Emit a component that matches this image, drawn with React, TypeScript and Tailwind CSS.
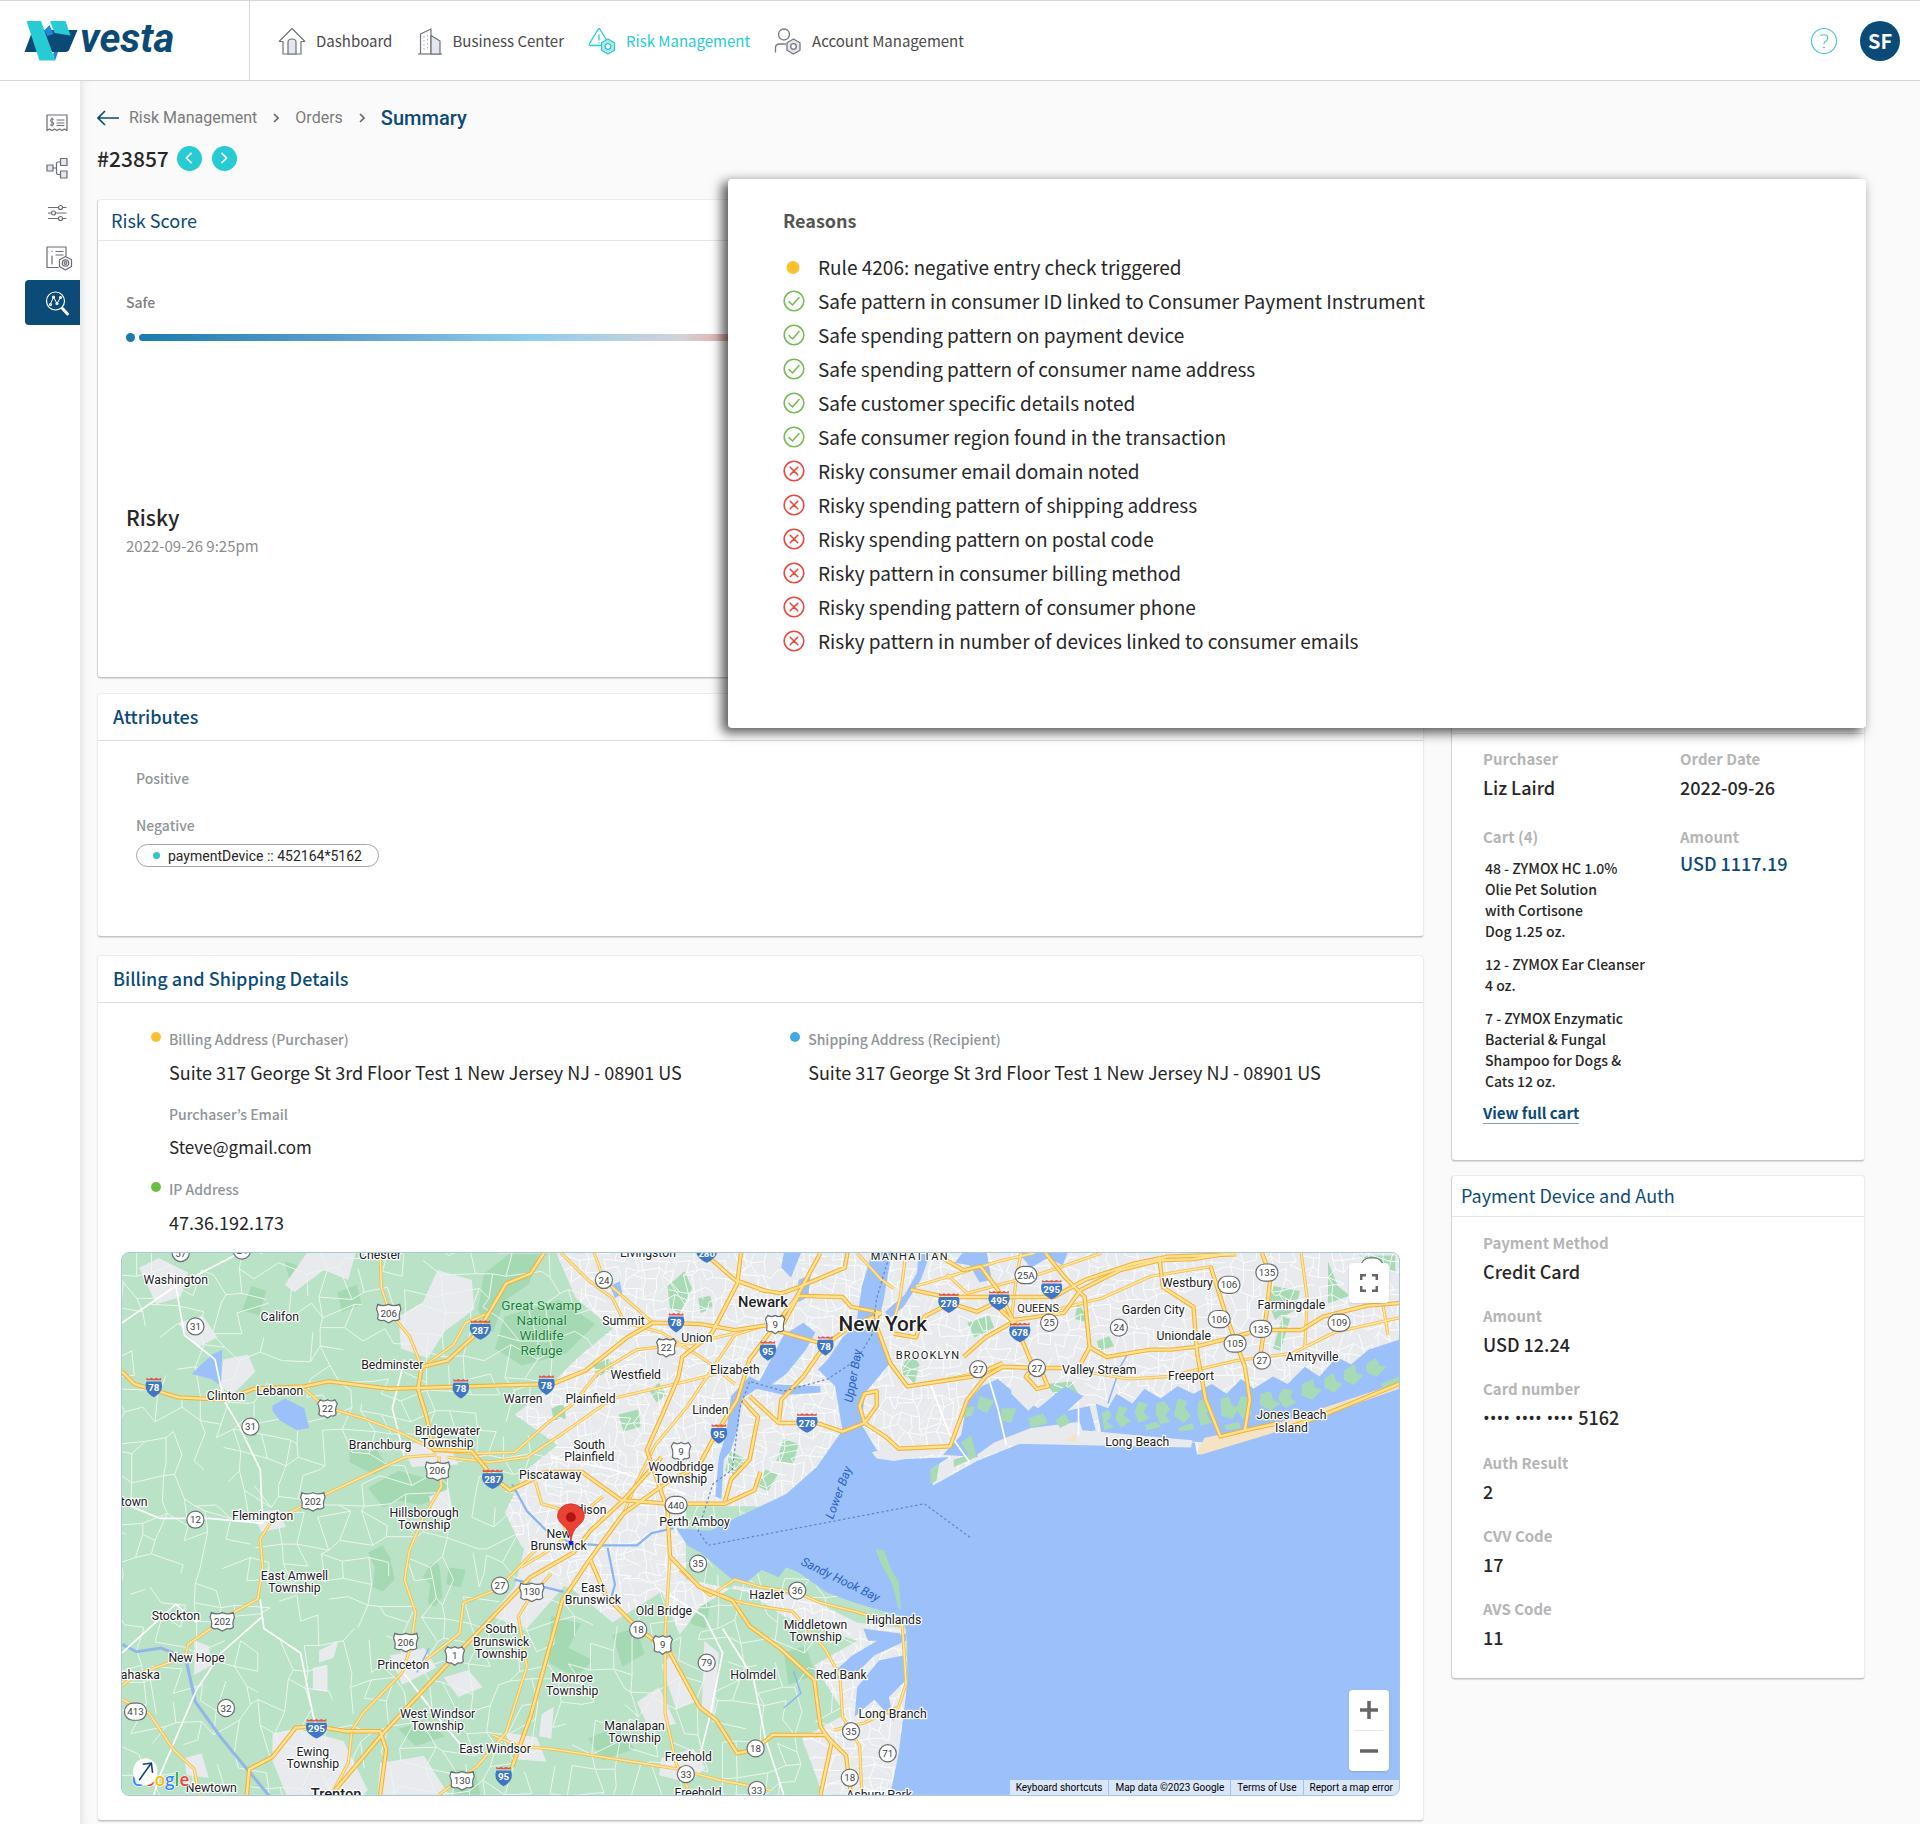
import type { ReactNode } from "react";

const reasons = [
  { kind: "rule", text: "Rule 4206: negative entry check triggered" },
  { kind: "safe", text: "Safe pattern in consumer ID linked to Consumer Payment Instrument" },
  { kind: "safe", text: "Safe spending pattern on payment device" },
  { kind: "safe", text: "Safe spending pattern of consumer name address" },
  { kind: "safe", text: "Safe customer specific details noted" },
  { kind: "safe", text: "Safe consumer region found in the transaction" },
  { kind: "risky", text: "Risky consumer email domain noted" },
  { kind: "risky", text: "Risky spending pattern of shipping address" },
  { kind: "risky", text: "Risky spending pattern on postal code" },
  { kind: "risky", text: "Risky pattern in consumer billing method" },
  { kind: "risky", text: "Risky spending pattern of consumer phone" },
  { kind: "risky", text: "Risky pattern in number of devices linked to consumer emails" },
];

const cartItems = [
  ["48 - ZYMOX HC 1.0%", "Olie Pet Solution", "with Cortisone", "Dog 1.25 oz."],
  ["12 - ZYMOX Ear Cleanser", "4 oz."],
  ["7 - ZYMOX Enzymatic", "Bacterial & Fungal", "Shampoo for Dogs &", "Cats 12 oz."],
];

const payment: { label: string; value: ReactNode }[] = [
  { label: "Payment Method", value: "Credit Card" },
  { label: "Amount", value: "USD 12.24" },
  {
    label: "Card number",
    value: (
      <>
        <span className="font-['Open_Sans',sans-serif]">•••• •••• •••• </span>5162
      </>
    ),
  },
  { label: "Auth Result", value: "2" },
  { label: "CVV Code", value: "17" },
  { label: "AVS Code", value: "11" },
];

/* ---------- Icons ---------- */

function Logo() {
  return (
    <svg viewBox="24 9 160 64" className="h-16 w-40" role="img" aria-label="vesta">
      <path d="M32 32h6l4 20H24.500z" fill="#0b4a74" />
      <path d="M43 30h34.500l-8 19q-1 3-4 3H52z" fill="#0b4a74" />
      <path d="M49.500 25l-5 5 3 6 6-2z" fill="#2484e0" />
      <path d="M53 54l2 7 3-9-4 0z" fill="#2484e0" />
      <path d="M50 21h15.500l5 14.500L54.500 33z" fill="#27cbd3" />
      <path d="M26.500 21H41l14 39.500H39.500z" fill="#27cbd3" />
      <text x="80" y="52" fontFamily="Roboto, sans-serif" fontSize="40" fontWeight="700" fontStyle="italic" fill="#0b4a74">
        vesta
      </text>
    </svg>
  );
}

function HomeIcon() {
  return (
    <svg viewBox="0 0 28 28" className="size-7" fill="none" stroke="#6e7276" strokeWidth="1.2" strokeLinejoin="round" aria-hidden="true">
      <path d="M1 14.500 14 1.500l13 13" />
      <path d="M1 14.500h4V27h18V14.500h4" />
      <path d="M10 27V15q0-3 4-3t4 3v12z" fill="#e4e7ee" />
    </svg>
  );
}

function BuildingIcon() {
  return (
    <svg viewBox="-2 0 26 28" className="h-7 w-[26px]" fill="none" stroke="#6e7276" strokeWidth="1.2" strokeLinejoin="round" aria-hidden="true">
      <path d="M0 27h24" />
      <path d="M2.500 27V7L13 2v25" />
      <path d="M13 8.500l9 5.500v13h-9z" fill="#e4e7ee" />
      <path d="M6 9v15M9.500 8v16" strokeDasharray="1.500 2.500" strokeWidth="1" stroke="#a9acb0" />
    </svg>
  );
}

function RiskIcon() {
  return (
    <svg viewBox="0 0 28 28" className="size-7" fill="none" stroke="#27cbd3" strokeWidth="1.300" strokeLinejoin="round" strokeLinecap="round" aria-hidden="true">
      <path d="M13 18.500H2.500Q.5 18.500 1.500 16.500L10 2.500q1-1.500 2 0L18 12" />
      <path d="M11 8v5M11 15.500v.3" />
      <path d="M20 12l6.500 3.800v7.400L20 27l-6.500-3.800v-7.400z" fill="#b9e4e6" />
      <circle cx="20" cy="19.500" r="2.800" fill="#fff" />
    </svg>
  );
}

function AccountIcon() {
  return (
    <svg viewBox="0 0 28 28" className="size-7" fill="none" stroke="#77797c" strokeWidth="1.300" strokeLinejoin="round" strokeLinecap="round" aria-hidden="true">
      <circle cx="10" cy="7.500" r="5.500" />
      <path d="M1.500 25v-4q0-4 4-4h6" />
      <path d="M19.500 12l6.500 3.800v7.400L19.500 27 13 23.200v-7.400z" fill="#e4e7ee" />
      <circle cx="19.500" cy="19.500" r="2.800" fill="#fff" />
    </svg>
  );
}

function SideIcon({ children, color = "#6a6c73" }: { children: ReactNode; color?: string }) {
  return (
    <svg viewBox="0 0 28 28" className="size-7 overflow-visible" fill="none" stroke={color} strokeWidth="1.200" strokeLinejoin="round" strokeLinecap="round" aria-hidden="true">
      {children}
    </svg>
  );
}

const sideItems = [
  {
    name: "Transactions",
    icon: (
      <SideIcon>
        <path d="M4 21.500V6h20v15.500l-2.500-1.500-2.500 1.500-2.500-1.500-2.500 1.500-2.500-1.500L9 21.500 6.500 20z" />
        <path d="M14 11h7M14 14h7M14 16.500h7" strokeWidth="1" />
        <path d="M10.500 10.200q-3-1-3 1t1.500 1.800 1.700 2-3.200 1M9 9v8" strokeWidth="1" />
      </SideIcon>
    ),
  },
  {
    name: "Relationships",
    icon: (
      <SideIcon>
        <path d="M4 11h6v6H4zM17.500 4.500H24v7h-6.500zM17.500 17H24v7h-6.500z" fill="#e4e7ee" />
        <path d="M10 14h3.500M17 8h-2q-1.500 0-1.500 1.500v9q0 2 1.500 2h2" />
      </SideIcon>
    ),
  },
  {
    name: "Settings",
    icon: (
      <SideIcon>
        <path d="M5.500 8.500h10M19.500 8.500H23M5.500 14H8M12.500 14H23M5.500 19.500h10M19.500 19.500H23" />
        <circle cx="17.500" cy="8.500" r="2" />
        <circle cx="10.500" cy="14" r="2" />
        <circle cx="17.500" cy="19.500" r="2" />
      </SideIcon>
    ),
  },
  {
    name: "Reports",
    icon: (
      <SideIcon>
        <path d="M15 23.500H4V3h19v9M9 12v8M9 7v.5M13 7.500h7M13 11h7" />
        <path d="M22.500 12.500l6 3.200v6.800l-6 3.500-6-3.500v-6.800z" fill="#fff" />
        <circle cx="22.500" cy="19" r="3.200" />
        <circle cx="22.500" cy="19" r="1.300" />
      </SideIcon>
    ),
  },
];

function InvestigateIcon() {
  return (
    <SideIcon color="#fff">
      <circle cx="12.500" cy="12" r="9" />
      <path d="M19.500 19.500l5 5.500" strokeWidth="3" />
      <path d="M7.500 15l3-7 3.500 6.500 3.500-6" strokeWidth="1" />
      <circle cx="7.500" cy="15.500" r="1" />
      <circle cx="10.500" cy="8" r="1" />
      <circle cx="14" cy="14.500" r="1" />
      <circle cx="17.500" cy="8.500" r="1" />
    </SideIcon>
  );
}

function ReasonIcon({ kind }: { kind: string }) {
  if (kind === "rule") {
    return (
      <svg viewBox="0 0 22 22" className="size-[22px]" aria-hidden="true">
        <circle cx="10" cy="11.500" r="6.500" fill="#fbc02d" />
      </svg>
    );
  }
  const safe = kind === "safe";
  return (
    <svg viewBox="0 0 22 22" className="size-[22px]" fill="none" stroke={safe ? "#77bd54" : "#e94a3f"} strokeWidth="1.600" strokeLinecap="round" strokeLinejoin="round" aria-hidden="true">
      <circle cx="11" cy="11" r="9.800" />
      <path d={safe ? "M6 11.500l3.500 3.500 6.500-7.500" : "M7.200 7.200l7.600 7.600M14.800 7.200l-7.600 7.600"} />
    </svg>
  );
}

function Chevron() {
  return (
    <svg viewBox="0 0 6 10" className="mx-4 h-2.5 w-1.5" fill="none" stroke="#666" strokeWidth="1.600" aria-hidden="true">
      <path d="M1 1l4 4-4 4" />
    </svg>
  );
}

/* ---------- Map ---------- */

// label rows: x (centre), y (middle of the first line), lines
const towns: [number, number, string[]][] = [
  [143, 1045, ["Washington"]],
  [228, 1076, ["Califon"]],
  [310, 1025, ["Chester"]],
  [320, 1115, ["Bedminster"]],
  [184, 1140, ["Clinton"]],
  [228, 1136, ["Lebanon"]],
  [509, 1079, ["Summit"]],
  [569, 1093, ["Union"]],
  [600, 1119, ["Elizabeth"]],
  [519, 1123, ["Westfield"]],
  [427, 1143, ["Warren"]],
  [482, 1143, ["Plainfield"]],
  [580, 1152, ["Linden"]],
  [365, 1169, ["Bridgewater", "Township"]],
  [310, 1180, ["Branchburg"]],
  [481, 1180, ["South", "Plainfield"]],
  [449, 1205, ["Piscataway"]],
  [556, 1198, ["Woodbridge", "Township"]],
  [109, 1227, ["town"]],
  [214, 1238, ["Flemington"]],
  [346, 1236, ["Hillsborough", "Township"]],
  [480, 1233, ["Edison"]],
  [567, 1243, ["Perth Amboy"]],
  [456, 1253, ["New", "Brunswick"]],
  [240, 1287, ["East Amwell", "Township"]],
  [484, 1297, ["East", "Brunswick"]],
  [143, 1320, ["Stockton"]],
  [542, 1316, ["Old Bridge"]],
  [626, 1303, ["Hazlet"]],
  [409, 1331, ["South", "Brunswick", "Township"]],
  [160, 1354, ["New Hope"]],
  [114, 1368, ["ahaska"]],
  [329, 1360, ["Princeton"]],
  [467, 1371, ["Monroe", "Township"]],
  [615, 1368, ["Holmdel"]],
  [666, 1327, ["Middletown", "Township"]],
  [730, 1323, ["Highlands"]],
  [687, 1368, ["Red Bank"]],
  [729, 1400, ["Long Branch"]],
  [357, 1400, ["West Windsor", "Township"]],
  [255, 1431, ["Ewing", "Township"]],
  [404, 1429, ["East Windsor"]],
  [518, 1410, ["Manalapan", "Township"]],
  [562, 1435, ["Freehold"]],
  [570, 1465, ["Freehold"]],
  [172, 1461, ["Newtown"]],
  [718, 1466, ["Asbury Park"]],
  [529, 1023, ["Livingston"]],
  [970, 1048, ["Westbury"]],
  [942, 1070, ["Garden City"]],
  [967, 1091, ["Uniondale"]],
  [1055, 1066, ["Farmingdale"]],
  [1072, 1108, ["Amityville"]],
  [898, 1119, ["Valley Stream"]],
  [973, 1124, ["Freeport"]],
  [929, 1178, ["Long Beach"]],
  [1055, 1156, ["Jones Beach", "Island"]],
];

const stateRoutes: [number, number, string][] = [
  [147, 1023, "57"], [197, 1021, "24"], [159, 1083, "31"], [493, 1045, "24"], [204, 1165, "31"], [159, 1241, "12"],
  [184, 1395, "32"], [110, 1398, "413"], [408, 1295, "27"], [570, 1277, "35"], [521, 1331, "18"],
  [577, 1358, "79"], [617, 1428, "18"], [560, 1449, "33"], [552, 1229, "440"], [651, 1299, "36"],
  [618, 1462, "33"], [695, 1414, "35"], [725, 1432, "71"], [694, 1452, "18"], [838, 1041, "25A"],
  [857, 1080, "25"], [914, 1084, "24"], [799, 1118, "27"], [847, 1117, "27"], [1031, 1111, "27"],
  [1004, 1049, "106"], [996, 1077, "106"], [1009, 1097, "105"], [1035, 1039, "135"], [1030, 1085, "135"],
  [1094, 1080, "109"], [1121, 1034, "110"],
];

const usRoutes: [number, number, string][] = [
  [317, 1072, "206"], [267, 1150, "22"], [357, 1201, "206"], [255, 1226, "202"], [181, 1324, "202"],
  [331, 1341, "206"], [371, 1352, "1"], [434, 1300, "130"], [377, 1454, "130"], [541, 1343, "9"],
  [556, 1185, "9"], [544, 1100, "22"], [633, 1081, "9"],
];

const interstates: [number, number, string][] = [
  [125, 1132, "78"], [376, 1133, "78"], [446, 1130, "78"], [552, 1079, "78"], [392, 1085, "287"],
  [402, 1207, "287"], [587, 1170, "95"], [627, 1102, "95"], [674, 1098, "78"], [258, 1411, "295"],
  [411, 1450, "95"], [659, 1161, "278"], [775, 1063, "278"], [816, 1061, "495"], [859, 1052, "295"],
  [833, 1087, "678"], [577, 1022, "280"],
];

const highways = [
  "M99 1120 109 1130 125 1135 145 1141 183 1143 207 1134 248 1132 268 1128 317 1134 385 1132 451 1130 478 1119 512 1092 533 1080 571 1081 600 1086 640 1080 652 1058",
  "M444 1023 433 1040 413 1048 399 1072 389 1089 365 1111 344 1116 341 1134 348 1157 354 1184 385 1185 402 1206 416 1217 433 1209 445 1202 475 1202 507 1225 547 1228",
  "M418 1443 433 1402 459 1307 481 1274 509 1236 547 1209 570 1198 585 1170 602 1143 612 1110 627 1090 650 1060 670 1023",
  "M547 1271 571 1296 598 1307 612 1328 638 1347 665 1372 670 1410 679 1424 670 1466",
  "M547 1271 545 1233 528 1184 540 1157 554 1124 557 1108 581 1089 602 1048 605 1023",
  "M482 1274 495 1304 519 1328 547 1350 571 1394 585 1405 602 1432 616 1429 631 1417 674 1417 691 1434 695 1466",
  "M201 1466 203 1445 222 1435 241 1411 258 1410 282 1414 310 1414 315 1429 310 1466",
  "M270 1466 313 1415 368 1356 433 1288 468 1268 482 1250 509 1225 540 1190",
  "M547 1228 592 1228 616 1217 621 1202M592 1226 597 1208 612 1192 619 1157 606 1143",
  "M612 1140 636 1162 667 1162 688 1169 706 1162 723 1173 734 1183 776 1181 785 1157 790 1143 805 1124 819 1116 847 1117 868 1117",
  "M706 1162 702 1148 706 1138 716 1136 716 1148 706 1162",
  "M716 1070 716 1083 727 1113 741 1132 794 1124 819 1113",
  "M744 1053 773 1059 808 1059 861 1059 886 1045 925 1032 954 1026 1010 1024",
  "M730 1089 748 1092 755 1075 776 1064 798 1071 812 1064 826 1078 869 1072 883 1053 915 1037 947 1029 975 1028 1005 1023",
  "M766 1023 773 1029 787 1037 801 1034 815 1053 830 1083 844 1116 838 1124 847 1134 856 1132 850 1118",
  "M883 1113 890 1100 904 1108 940 1102 957 1102 975 1100 1007 1092 1028 1086 1063 1086 1081 1075 1117 1066 1143 1064",
  "M854 1023 869 1042 886 1059 890 1100",
  "M947 1026 950 1051 975 1067 978 1105 985 1143 997 1173 1017 1168 1045 1162",
  "M989 1034 1003 1078 1017 1116 1021 1143 1017 1168",
  "M1031 1023 1038 1042 1035 1070 1028 1118",
  "M787 1108 805 1092 830 1078",
  "M620 1053 638 1056 652 1051 690 1035 692 1023M652 1058 688 1059 695 1067 720 1072",
  "M633 1086 674 1098 692 1085 720 1072M674 1098 656 1124 638 1143 636 1162",
  "M575 1023 600 1045 625 1054M1045 1168 1075 1158 1143 1130",
];

const mainRoads = [
  "M310 1023 311 1051 318 1072 334 1091 344 1116M358 1189 360 1214 345 1240 334 1266 330 1290 339 1317 335 1345 328 1366 296 1399 287 1413 284 1440 270 1466",
  "M99 1377 110 1368 151 1353 153 1343 190 1317 210 1306 214 1280 212 1257 220 1244 255 1225 330 1190 356 1188",
  "M248 1134 265 1149 296 1158 327 1170 354 1184 385 1187 420 1186 447 1162 468 1146 488 1121 520 1102 564 1097 598 1089",
  "M365 1190 400 1194 430 1190 460 1170 500 1142 560 1128 600 1118",
  "M99 1388 121 1399 141 1429 158 1445 162 1466M358 1466 389 1443 413 1415 430 1361 423 1320 433 1304 450 1285",
  "M347 1356 375 1334 378 1309 406 1298 437 1266 450 1262",
  "M402 1417 423 1426 454 1429 523 1440 554 1445 588 1454 629 1462",
  "M547 1271 543 1334 543 1399 552 1440 564 1466",
  "M555 1282 580 1303 600 1290 621 1296 652 1301 670 1309 698 1316 737 1328 740 1375 734 1394 706 1407 681 1413",
  "M598 1307 621 1312 647 1316 674 1347 686 1369 688 1402 702 1426 704 1466",
  "M741 1132 780 1125 819 1116 868 1117 922 1126 954 1124 1010 1111 1056 1105 1090 1088 1143 1076",
  "M458 1023 480 1045 500 1060 510 1080 540 1088 575 1110 600 1130",
  "M485 1023 493 1045 510 1060 533 1080M345 1116 370 1098 380 1080 399 1072",
  "M509 1236 520 1210 535 1180 560 1150 580 1120 600 1090 628 1081",
  "M748 1050 776 1042 815 1030 845 1023M773 1040 790 1056 850 1040 900 1023",
  "M860 1070 900 1060 940 1042 990 1034M1063 1023 1068 1060 1066 1100M1130 1066 1134 1090",
  "M740 1023 735 1060 728 1085M700 1023 720 1045 730 1052M834 1023 830 1045 826 1078",
  "M437 1210 442 1228 456 1232 462 1250M492 1222 470 1240 455 1262 425 1280",
];

const localRoads = [
  "M99 1080 143 1050 195 1023M143 1050 150 1090 175 1110 182 1143 195 1165 212 1200 214 1244",
  "M99 1227 130 1240 170 1240 214 1244M212 1306 215 1330 245 1350 255 1400 258 1410",
  "M214 1320 180 1350 160 1380 130 1450 125 1466M99 1350 143 1310 160 1325",
  "M547 1303 575 1320 590 1350 580 1400 570 1440M590 1330 615 1370 625 1420 640 1466",
  "M329 1366 355 1400 380 1430M330 1190 320 1150 330 1110M450 1190 500 1200 560 1220",
  "M806 1120 815 1150 822 1180M760 1130 775 1170 792 1194M881 1172 881 1150",
];

const darkWoods = [
  "M300 1215l25-14 22 6 8-12 12 4-4 22-20 8-20-4-10 6z",
  "M345 1288l6-10 6-2 2 6 2 22-6 8-6-2 2-16z",
  "M395 1040l20-16 25 0-8 24-20 14-10 26-12-18z",
  "M412 1075l44-14 30 20-24 24-36 10-22-14z",
  "M300 1268l12-6 6 10 4 18-10 10-8-4 2-16zM366 1280l14 2-4 14-12-2z",
  "M285 1180l22 4 10 14-12 6-20-10zM205 1050l12 4-6 20-14-4z",
  "M450 1320l24 6-10 20 20 10-14 14-22-12z",
  "M325 1412l22-6 16 12-24 8zM370 1445l18 2 4 19h-22z",
  "M232 1030l14 4 6 14-14 4zM275 1055l16-6 4 16-16 6z",
  "M500 1335l20-6 6 22-18 10zM480 1420l24-10 14 18-26 10z",
  "M568 1300l12 10-4 20-12-4zM640 1350l18-6 8 24-22 8z",
];

const cityParks = [
  "M545 1050l14-12 6 14-10 20-8-4zM505 1155l16-4 2 14-14 4zM596 1185l12 6-6 14-10-4z",
  "M735 1120l8-16 8 10-4 16zM855 1130l20-2 6 10-16 6zM1040 1050l22 4-4 16-16 8-6-14z",
  "M1085 1030l8 20 10 8-18 6zM640 1175l12 4-4 16-14-2zM625 1200l10 4-8 14-8-4zM896 1095l10-4 4 8-12 4z",
  "M530 1135l8-6 6 10-8 6zM880 1065l8 2-2 12-8-2zM1110 1025h30v14l-12-6zM790 1080l18-6 4 10-16 8zM1048 1075l6 2-8 26-6-2z",
  "M485 1115l12-6 4 8-14 8zM450 1150l10-4 2 12-10 2zM590 1240l8 4-6 8-6-4zM570 1060l10-2 2 10-10 4z",
];

// jittered street mesh, same result on every render
function streetMesh(x0: number, y0: number, x1: number, y1: number, step: number, keep: number) {
  const rnd = (i: number, j: number, k: number) => {
    const v = Math.sin(i * 127.1 + j * 311.7 + k * 74.7) * 43758.5453;
    return v - Math.floor(v);
  };
  const point = (i: number, j: number) => {
    const x = x0 + i * step + (rnd(i, j, 1) - 0.5) * step * 0.9;
    const y = y0 + j * step + (rnd(i, j, 2) - 0.5) * step * 0.9;
    return `${Math.round(x)} ${Math.round(y)}`;
  };
  let d = "";
  for (let i = 0; x0 + i * step < x1; i++) {
    for (let j = 0; y0 + j * step < y1; j++) {
      if (rnd(i, j, 3) < keep) d += `M${point(i, j)}L${point(i + 1, j)}`;
      if (rnd(i, j, 4) < keep) d += `M${point(i, j)}L${point(i, j + 1)}`;
    }
  }
  return d;
}

const countryStreets = streetMesh(95, 1020, 760, 1470, 17, 0.62);
const cityStreets = streetMesh(400, 1020, 1150, 1470, 8, 0.72);

const urban =
  "M454 1023 470 1060 500 1085 470 1110 440 1140 420 1155 455 1180 430 1200 412 1235 425 1262 450 1290 470 1300 500 1325 540 1300 555 1335 572 1312 600 1295 660 1305 700 1325 740 1330 740 1466 672 1466 655 1420 690 1400 665 1360 700 1340 640 1320 610 1300 560 1290 560 1230 H1143 V1023z";

function Map() {
  return (
    <svg viewBox="99 1023 1044 443" className="block h-auto w-full" fontFamily="Roboto, sans-serif" role="img" aria-label="Map of New Brunswick and New York">
      <defs>
        <clipPath id="urban">
          <path d={urban} />
        </clipPath>
      </defs>
      <rect x="99" y="1023" width="1044" height="443" fill="#b9e2c6" />
      <g fill="#a5d9b3">
        {darkWoods.map((d) => <path key={d} d={d} />)}
      </g>
      <path d={urban} fill="#e8eaed" />
      {/* small towns outside of the city */}
      <g fill="#e8eaed">
        <path d="M113 1035l16-8 24 12-6 20-20 6zM145 1080l20-6 12 18-16 8zM182 1110l20-4 6 14-18 18-12-6zM250 1023h40l-6 22-20-8-24 18-8-6z" />
        <path d="M325 1075l20-12 12-26 28 8 2 24-24 18-14 22-22-8zM205 1235l22-2 6 14-20 4zM328 1180l36-6 10 22-38 2zM350 1222l16-6 4 20-16 4z" />
        <path d="M158 1340l12 4 2 16-14 8zM318 1352l28-6 10 16-28 14zM222 1416l20-4 38 10 20 40-6 6h-60l-12-30zM362 1370l20-6 12 14-20 8zM260 1348l16-8-4 14-12 4z" />
        <path d="M520 1390l18-12 14 30-22 4zM540 1360l10-10 18 40-16 6zM575 1340l12 10-4 50-10-4zM442 1400l10-6-2 26-10-2zM540 1436l26-8 10 16-14 12-24-6zM412 1415l26 4 8 20-24-2z" />
        <path d="M310 1440l36-6 20 32h-58zM150 1436l14-4 6 20-18-2zM400 1320l20-24 10-40 40-10-10 50-30 34zM255 1362l12-2v22l-12-2z" />
      </g>
      <g fill="#a8dab5">
        {cityParks.map((d) => <path key={d} d={d} />)}
      </g>
      <path d={countryStreets} stroke="#ecf6ef" strokeWidth="0.800" fill="none" />
      <g clipPath="url(#urban)">
        <path d={cityStreets} stroke="#fff" strokeWidth="0.700" fill="none" />
      </g>

      {/* ocean, harbour and rivers */}
      <g fill="#9cc0f9">
        <path d="M552 1248 561 1262 572 1268 598 1290 610 1292 622 1282 636 1288 642 1280 652 1284 674 1300 695 1308 722 1316 738 1320 741 1340 741 1375 739 1392 734 1432 727 1466H1143V1130L1100 1148 1045 1168 1010 1178 978 1188 976 1178 900 1178 833 1179 798 1193 762 1213 760 1200 775 1190 727 1192 716 1184 704 1164 706 1138 727 1113 716 1086 722 1060 728 1023H712L704 1050 699 1082 688 1092 676 1110 668 1118 682 1132 688 1168 667 1198 642 1220 621 1230 600 1240 580 1250z" />
        <path d="M785 1172 790 1145 802 1132 815 1126 832 1140 848 1150 870 1132 885 1140 872 1152 890 1148 895 1168 870 1174 835 1176 800 1190 770 1188z" />
        <path d="M895 1146 905 1150 912 1138 925 1146 935 1134 948 1142 962 1132 975 1138 990 1130 1002 1138 1014 1126 1024 1134 1040 1124 1052 1130 1066 1116 1078 1124 1092 1108 1104 1114 1118 1102 1143 1094V1136L1040 1166 985 1178 900 1172z" />
        <path d="M652 1045l10-4-2 18-8 4zM640 1090l16-10 10 8-8 14-16 20-14 10-8-4zM612 1124l12 6 46 2v5l-30 2-22-5-12 8-3 22-6 20-6 8-2 32-5-2 3-32 6-20 4-30z" />
        <path d="M786 1023h20l4 22-10 2-8-14-12-2zM832 1023h40l-4 10-12-6-14 8zM750 1023h10l-8 22-14 22-12 10-3-6 16-14 10-18zM640 1023h14l-8 20-8-8z" />
        <path d="M173 1106l8-4-1 30-8-6-16-4 8-8zM222 1148l10-6 16 8 4 16-10 2-14-8-6-8zM498 1050l8-4 2 10-6 4z" />
        <path d="M676 1370l20-18 24-14 20-4v6l-26 12-20 20zM700 1378l18-22 20-4 2 20-14 14 4 20-16-18-16 14zM705 1330l30 4v6l-26 0z" />
      </g>
      <g fill="none" stroke="#8ab4f3" strokeWidth="2">
        <path d="M99 1343l12 6 20-3 20 8 8 36 20 28 18 22 25 30 15 20 30 18" strokeWidth="2.500" stroke="#93b5e8" />
        <path d="M418 1212l12 22 16 16 20 10 24 2 30 0 12-10 18-4M496 1264l6 30-4 14M420 1290l40 10" strokeWidth="1.800" />
        <path d="M340 1366l10-20M640 1395l14-12-6-18M905 1146l10-30 6-10" strokeWidth="1.200" />
      </g>

      {/* islands, marshes and beaches */}
      <g fill="#e8eaed">
        <path d="M712 1186l18-5 36 1-2 5-34 6-14-2z" />
        <path d="M798 1188l14-10 30-12 40-5 2 7 90 8-1 6-96-2-48-1-30 12z" />
        <path d="M766 1198l12-7 2 9-12 10z" />
        <path d="M826 1128l18-2 6 16-10 10-14-14z" />
      </g>
      <g fill="#a8dab5">
        <path d="M760 1200l7-5-2 14-5 3zM779 1192l18-6v4l-18 8z" />
        <path d="M715 1265l7 1 6 16 6 10 2 22h-2l-6-22-8-14z" />
        <path d="M788 1150l8-2-2 8-8 2zM800 1140l12 4-6 10-8-4zM818 1150l12 0-4 12-8-2zM840 1158l12-4 4 8-14 4zM785 1178l8-6 4 14-6 2zM862 1160l8-6 4 8-8 4z" />
        <path d="M900 1154l5-3 3 5-4 5 6 4-8 3zM914 1148l7 2-3 6 6 4-8 6-5-8zM930 1144l8 3-4 6 5 5-9 4-3-9zM945 1146l6-2 5 7-4 4 4 6-8 2-4-9zM962 1142l8 2-2 6 5 6-6 6-8-6zM979 1144l6-2 5 9-5 3 5 8-9 2-3-10zM997 1142l7-2 2 7 6 3-5 9-9-3zM1014 1140l8 2-3 6 4 6-8 5-5-9zM1030 1138l8-2 2 7 6 3-8 6-9-5zM1048 1134l8 1-2 6 5 4-9 5-6-8zM1064 1130l9-4 1 7 6 2-8 8-9-4zM1082 1126l7-5 3 7 5 2-7 7-8-4zM1098 1119l9-5 1 7 6 2-8 8-8-4zM1116 1114l8-5 3 6 6 1-8 8-8-3z" />
        <path d="M935 1164l9-3 5 4-12 3zM962 1166l12-4 2 5-12 2zM1000 1164l12-3 2 5-12 2zM1030 1156l14-4 2 5-14 4zM1128 1130l15-6v6l-12 5z" />
      </g>
      <path d="M978 1186l6-12 30-6 30-6 99-33v5l-96 34-66 20zM871 1176l8-6v8z" fill="#f5e3c6" />

      <g fill="none" stroke="#fff" strokeWidth="1.400">
        {localRoads.map((d) => <path key={d} d={d} />)}
      </g>
      <g fill="none" strokeLinejoin="round">
        {mainRoads.map((d) => <path key={d} d={d} stroke="#f3bf4d" strokeWidth="2.600" />)}
        {mainRoads.map((d) => <path key={d} d={d} stroke="#fde7a6" strokeWidth="1.200" />)}
        {highways.map((d) => <path key={d} d={d} stroke="#f2b134" strokeWidth="3.600" />)}
        {highways.map((d) => <path key={d} d={d} stroke="#fde293" strokeWidth="1.900" />)}
      </g>
      <path d="M727 1023 716 1060 712 1090 700 1110 676 1126 640 1136 612 1128 604 1150 598 1200 582 1212 570 1250 578 1262 755 1228 793 1256" fill="none" stroke="#6685b8" strokeWidth="1" strokeDasharray="2 2" />

      {/* route shields */}
      {stateRoutes.map(([x, y, n]) => (
        <g key={`${x}-${y}`}>
          <rect x={x - (n.length > 2 ? 9 : 7)} y={y - 7} width={n.length > 2 ? 18 : 14} height="14" rx="7" fill="#fff" stroke="#6b6f73" />
          <text x={x} y={y + 3} fontSize="8" textAnchor="middle" fill="#3c4043">{n}</text>
        </g>
      ))}
      {usRoutes.map(([x, y, n]) => (
        <g key={`${x}-${y}`}>
          <path
            transform={`translate(${x} ${y})`}
            d={n.length > 2 ? "M-9-7Q-5-5 0-7 5-5 9-7L10-3Q8 0 9 5 7 7 4 6L0 8-4 6Q-7 7-9 5-8 0-10-3z" : "M-6-7Q-3-5 0-7 3-5 6-7L8-4Q6 0 7 5 5 7 3 6L0 8-3 6Q-5 7-7 5-6 0-8-4z"}
            fill="#fff"
            stroke="#6b6f73"
          />
          <text x={x} y={y + 3} fontSize="8" textAnchor="middle" fill="#3c4043">{n}</text>
        </g>
      ))}
      {interstates.map(([x, y, n]) => (
        <g key={`${x}-${y}`}>
          <path transform={`translate(${x} ${y})`} d={n.length > 2 ? "M-8-4H8Q11 4 0 9-11 4-8-4z" : "M-6-4H6Q9 4 0 9-9 4-6-4z"} fill="#3f76c6" />
          <path transform={`translate(${x} ${y})`} d={n.length > 2 ? "M-8-7l2 1 2-1 2 1 2-1 2 1 2-1 2 1 2-1v2H-8z" : "M-6-7l2 1 2-1 2 1 2-1 2 1 2-1v2H-6z"} fill="#e0554d" />
          <text x={x} y={y + 4} fontSize="8" fontWeight="700" textAnchor="middle" fill="#fff">{n}</text>
        </g>
      ))}

      {/* names */}
      <g textAnchor="middle" fill="#202124" stroke="#fff" strokeWidth="2" strokeLinejoin="round" paintOrder="stroke">
        {towns.map(([x, y, lines]) => (
          <text key={`${x}-${y}`} fontSize="10">
            {lines.map((line, i) => (
              <tspan key={line} x={x} y={y + 3 + i * 10}>{line}</tspan>
            ))}
          </text>
        ))}
        <text x="721" y="1087" fontSize="17" fontWeight="500">New York</text>
        <text x="623" y="1067" fontSize="12" fontWeight="500">Newark</text>
        <text x="274" y="1469" fontSize="12" fontWeight="500">Trenton</text>
        <text x="758" y="1110" fontSize="9" letterSpacing="1">BROOKLYN</text>
        <text x="848" y="1071" fontSize="9">QUEENS</text>
        <text x="743" y="1029" fontSize="9" letterSpacing="1">MANHATTAN</text>
      </g>
      <text fontSize="11" textAnchor="middle" fill="#188038" stroke="#cfeed8" strokeWidth="1" paintOrder="stroke">
        <tspan x="442" y="1070">Great Swamp</tspan>
        <tspan x="442" y="1082">National</tspan>
        <tspan x="442" y="1094">Wildlife</tspan>
        <tspan x="442" y="1106">Refuge</tspan>
      </text>
      <g fontSize="10" fill="#2a62c4" fontStyle="italic" textAnchor="middle">
        <text transform="translate(700 1124) rotate(-80)">Upper Bay</text>
        <text transform="translate(688 1220) rotate(-70)">Lower Bay</text>
        <text transform="translate(685 1293) rotate(26)">Sandy Hook Bay</text>
      </g>

      {/* pin */}
      <circle cx="466" cy="1260" r="2" fill="#1a1ae6" />
      <path d="M466 1259q-1-9-6-13-5-4-5-8a11 10 0 0 1 22 0q0 4-5 8-5 4-6 13z" fill="#ea4335" stroke="#c5221f" strokeWidth="0.500" />
      <circle cx="466" cy="1239" r="4" fill="#b31412" />

      <text x="107" y="1459" fontFamily="Open Sans, sans-serif" fontSize="14" fontWeight="600" stroke="#fff" strokeWidth="1" paintOrder="stroke">
        <tspan fill="#4285f4">G</tspan>
        <tspan fill="#ea4335">o</tspan>
        <tspan fill="#fbbc04">o</tspan>
        <tspan fill="#4285f4">g</tspan>
        <tspan fill="#34a853">l</tspan>
        <tspan fill="#ea4335">e</tspan>
      </text>
      <ellipse cx="118" cy="1447" rx="10" ry="11" fill="#fff" />
      <path d="M113 1454 123 1440M116 1441l7-1 1 8" fill="none" stroke="#0b4a74" strokeWidth="1.300" />
    </svg>
  );
}

function MapPanel() {
  return (
    <div className="relative mx-[23px] mt-[18px] overflow-hidden rounded-lg border border-[#a9c6d6]">
      <Map />
      <button type="button" aria-label="Toggle fullscreen" className="absolute top-2.5 right-2.5 grid size-10 place-items-center rounded-sm bg-white shadow">
        <svg viewBox="0 0 18 18" className="size-[18px]" fill="none" stroke="#666" strokeWidth="2.500" aria-hidden="true">
          <path d="M1.200 6V1.200H6M12 1.200h4.800V6M16.800 12v4.800H12M6 16.800H1.200V12" />
        </svg>
      </button>
      <div className="absolute right-2.5 bottom-6 flex w-10 flex-col items-center rounded-sm bg-white shadow">
        <button type="button" aria-label="Zoom in" className="grid size-10 place-items-center">
          <svg viewBox="0 0 18 18" className="size-[18px]" stroke="#666" strokeWidth="3.500" aria-hidden="true">
            <path d="M0 9h18M9 0v18" />
          </svg>
        </button>
        <span className="h-px w-[30px] bg-[#e6e6e6]" />
        <button type="button" aria-label="Zoom out" className="grid size-10 place-items-center">
          <svg viewBox="0 0 18 18" className="size-[18px]" stroke="#666" strokeWidth="3.500" aria-hidden="true">
            <path d="M0 9h18" />
          </svg>
        </button>
      </div>
      <div className="absolute right-0 bottom-0 flex divide-x divide-[#9cc0f9] bg-[#dbe7f8] font-[Roboto,sans-serif] text-[10px] leading-[15px] text-black">
        <button type="button" className="px-1.5">Keyboard shortcuts</button>
        <span className="px-1.5">Map data ©2023 Google</span>
        <a href="#terms" className="px-1.5">Terms of Use</a>
        <a href="#report" className="px-1.5">Report a map error</a>
      </div>
    </div>
  );
}

/* ---------- Page parts ---------- */

function NavLink({ icon, label, active = false }: { icon: ReactNode; label: string; active?: boolean }) {
  return (
    <a href="#" className={active ? "flex items-center gap-2.5 text-[#27cbd3]" : "flex items-center gap-2.5 text-[#4a4a4a]"}>
      {icon}
      {label}
    </a>
  );
}

function SideField({ label, value, accent = false }: { label: string; value: ReactNode; accent?: boolean }) {
  return (
    <div>
      <dt className="text-[15px] leading-5 font-bold text-[#b5b5b5]">{label}</dt>
      <dd className={accent ? "mt-1 text-lg leading-6 font-medium text-[#0c4a77]" : "mt-1.5 text-lg leading-6 font-medium text-[#272727]"}>
        {value}
      </dd>
    </div>
  );
}

function AddressField({ dot, label, value, compact = false }: { dot?: string; label: string; value: string; compact?: boolean }) {
  return (
    <div className="flex">
      <span className="w-[18px] shrink-0 pt-[3px]">{dot && <span className={`block size-2.5 rounded-full ${dot}`} />}</span>
      <div>
        <dt className="text-sm leading-5 font-medium text-[#8f9497]">{label}</dt>
        <dd className={compact ? "mt-[11px] text-[17px] leading-6 text-[#262626]" : "mt-[11px] text-lg leading-6 text-[#262626]"}>{value}</dd>
      </div>
    </div>
  );
}

const card = "rounded border border-[#ececec] border-b-[#c4c4c4] bg-white shadow-[0_1px_1px_rgba(0,0,0,0.12)]";

export default function App() {
  return (
    <div className="flex min-h-screen flex-col bg-white font-['Noto_Sans_CJK_KR',sans-serif] text-[#272727]">
      <header className="flex h-[81px] items-center border-t border-b border-[#d6d6d6] bg-white">
        <a href="#" className="flex h-full w-[250px] shrink-0 items-center border-r border-[#d6d6d6] pl-6">
          <Logo />
        </a>
        <nav className="flex items-center gap-6 pl-7 text-[15px] leading-5">
          <NavLink icon={<HomeIcon />} label="Dashboard" />
          <NavLink icon={<BuildingIcon />} label="Business Center" />
          <NavLink icon={<RiskIcon />} label="Risk Management" active />
          <NavLink icon={<AccountIcon />} label="Account Management" />
        </nav>
        <div className="ml-auto flex items-center gap-[22px] pr-5">
          <button type="button" aria-label="Help">
            <svg viewBox="0 0 28 28" className="size-7" fill="none" stroke="#45c5cc" strokeWidth="1.100" strokeLinecap="round" aria-hidden="true">
              <circle cx="14" cy="14" r="12.500" />
              <path d="M11 8.500q3-1.500 6 0 2 3-1 5.500-2 1-2 2.500M13.500 20.500h1" />
            </svg>
          </button>
          <button type="button" className="size-10 rounded-full bg-[#0c4a77] text-xl leading-10 font-bold text-white">SF</button>
        </div>
      </header>

      <div className="flex flex-1">
        <aside className="flex w-20 shrink-0 flex-col items-end bg-white pt-[19px]">
          {sideItems.map((item) => (
            <a key={item.name} href="#" aria-label={item.name} className="grid h-[45px] w-[55px] place-items-center pl-2">
              {item.icon}
            </a>
          ))}
          <a href="#" aria-label="Investigate" className="grid h-[45px] w-[55px] place-items-center rounded-l bg-[#0c4a77] pl-2">
            <InvestigateIcon />
          </a>
        </aside>

        <main className="relative min-w-0 flex-1 bg-[#fafafa] pt-[25px] pr-[55px] pb-1 pl-[17px] shadow-[inset_8px_0_8px_-6px_rgba(0,0,0,0.1)]">
          <nav aria-label="Breadcrumb" className="flex h-6 items-center font-[Roboto,sans-serif] text-base text-[#7b7b7b]">
            <a href="#" aria-label="Back" className="mr-2.5">
              <svg viewBox="0 0 22 16" className="h-4 w-[22px]" fill="none" stroke="#0c4a77" strokeWidth="1.600" aria-hidden="true">
                <path d="M22 8H1M8 1 1 8l7 7" />
              </svg>
            </a>
            <a href="#">Risk Management</a>
            <Chevron />
            <a href="#">Orders</a>
            <Chevron />
            <span className="text-xl font-medium text-[#0c4a77]">Summary</span>
          </nav>

          <div className="mt-3 flex h-8 items-center">
            <h1 className="mr-2 text-[21px] leading-8 font-medium">#23857</h1>
            <button type="button" aria-label="Previous order" className="mr-2.5 grid size-[25px] place-items-center rounded-full bg-[#27cbd3]">
              <svg viewBox="0 0 8 14" className="h-3 w-2" fill="none" stroke="#fff" strokeWidth="2" aria-hidden="true">
                <path d="M7 1 1 7l6 6" />
              </svg>
            </button>
            <button type="button" aria-label="Next order" className="grid size-[25px] place-items-center rounded-full bg-[#27cbd3]">
              <svg viewBox="0 0 8 14" className="h-3 w-2" fill="none" stroke="#fff" strokeWidth="2" aria-hidden="true">
                <path d="M1 1l6 6-6 6" />
              </svg>
            </button>
          </div>

          {/* Risk score */}
          <section className={`mt-[25px] border-l-[#d4d4d4] ${card}`}>
            <h2 className="border-b border-[#e6e6e6] px-[13px] text-lg leading-10 text-[#0c4a77]">Risk Score</h2>
            <div className="px-7 pt-[51px] pb-[121px]">
              <p className="text-sm leading-5 font-medium text-[#808080]">Safe</p>
              <div className="mt-[21px] flex items-center gap-1">
                <span className="size-[9px] rounded-full bg-[#1a7bb0]" />
                <span className="h-[7px] flex-1 rounded-sm bg-[linear-gradient(90deg,#1a7bb0_0,#6aa6d4_14%,#8ecdee_23%,#d3d2d8_32%,#e5a9a3_35%,#c9322b_100%)]" />
              </div>
              <p className="mt-[159px] text-[21px] leading-8 font-medium">Risky</p>
              <p className="mt-[3px] text-[15px] leading-5 text-[#8c8c8c]">2022-09-26 9:25pm</p>
            </div>
          </section>

          <div className="mt-[15px] grid grid-cols-[minmax(0,1fr)_414px] items-start gap-[27px]">
            <div className="space-y-[18px]">
              <section className={card}>
                <h2 className="border-b border-[#dcdcdc] px-[15px] pb-0.5 text-lg leading-[44px] font-medium text-[#0c4a77]">Attributes</h2>
                <dl className="px-[38px] pt-[27px] pb-[69px] text-sm leading-5 font-medium text-[#8f9497]">
                  <dt>Positive</dt>
                  <dt className="mt-[27px]">Negative</dt>
                  <dd className="mt-[9px] flex h-[23px] w-fit items-center gap-2 rounded-full border border-[#a5a5a5] px-4 font-[Roboto,sans-serif] text-sm leading-5 font-normal text-[#262626]">
                    <span className="size-[7px] rounded-full bg-[#35c3cc]" />
                    paymentDevice :: 452164*5162
                  </dd>
                </dl>
              </section>

              <section className={`pb-6 ${card}`}>
                <h2 className="border-b border-[#dcdcdc] px-[15px] pb-0.5 text-lg leading-[44px] font-medium text-[#0c4a77]">Billing and Shipping Details</h2>
                <div className="grid grid-cols-[101fr_100fr] pt-[26px] pl-[53px]">
                  <dl className="space-y-5">
                    <AddressField dot="bg-[#fbc02d]" label="Billing Address (Purchaser)" value="Suite 317 George St 3rd Floor Test 1 New Jersey NJ - 08901 US" />
                    <AddressField label="Purchaser’s Email" value="Steve@gmail.com" compact />
                    <AddressField dot="bg-[#6cbf3f]" label="IP Address" value="47.36.192.173" />
                  </dl>
                  <dl>
                    <AddressField dot="bg-[#42a9e0]" label="Shipping Address (Recipient)" value="Suite 317 George St 3rd Floor Test 1 New Jersey NJ - 08901 US" />
                  </dl>
                </div>
                <MapPanel />
              </section>
            </div>

            <div className="space-y-3.5">
              <section className={`border-l-[#d4d4d4] ${card}`}>
                <h2 className="border-b border-[#e6e6e6] px-[9px] text-lg leading-[39px] text-[#0c4a77]">Order Summary</h2>
                <div className="grid grid-cols-[197px_1fr] gap-y-7 pt-[15px] pb-9 pl-[31px]">
                  <SideField label="Purchaser" value="Liz Laird" />
                  <SideField label="Order Date" value="2022-09-26" />
                  <div>
                    <h3 className="text-[15px] leading-5 font-bold text-[#b5b5b5]">Cart (4)</h3>
                    <ul className="mt-[11px] space-y-3 pl-0.5 text-sm leading-[21px] font-medium">
                      {cartItems.map((lines) => (
                        <li key={lines[0]}>
                          {lines.map((line) => (
                            <span key={line} className="block">{line}</span>
                          ))}
                        </li>
                      ))}
                    </ul>
                    <a href="#" className="mt-[11px] inline-block border-b border-[#7f9dbd] text-[15px] leading-5 font-bold text-[#0c4a77]">View full cart</a>
                  </div>
                  <SideField label="Amount" value="USD 1117.19" accent />
                </div>
              </section>

              <section className={`border-l-[#d4d4d4] ${card}`}>
                <h2 className="border-b border-[#e6e6e6] px-[9px] pb-0.5 text-lg leading-[38px] text-[#0c4a77]">Payment Device and Auth</h2>
                <dl className="space-y-[23px] pt-4 pb-[29px] pl-[31px]">
                  {payment.map((row) => (
                    <SideField key={row.label} label={row.label} value={row.value} />
                  ))}
                </dl>
              </section>
            </div>
          </div>

          {/* Reasons popover, floats over the cards */}
          <section className="absolute top-[98px] right-[54px] left-[648px] rounded bg-white pt-[29px] pb-[70px] pl-[55px] shadow-[-5px_4px_12px_1px_rgba(0,0,0,0.65)]">
            <h2 className="text-lg leading-6 font-bold text-[#555]">Reasons</h2>
            <ul className="mt-[18px] text-[19px] leading-[34px]">
              {reasons.map((reason) => (
                <li key={reason.text} className="flex items-center gap-[13px]">
                  <ReasonIcon kind={reason.kind} />
                  {reason.text}
                </li>
              ))}
            </ul>
          </section>
        </main>
      </div>
    </div>
  );
}
